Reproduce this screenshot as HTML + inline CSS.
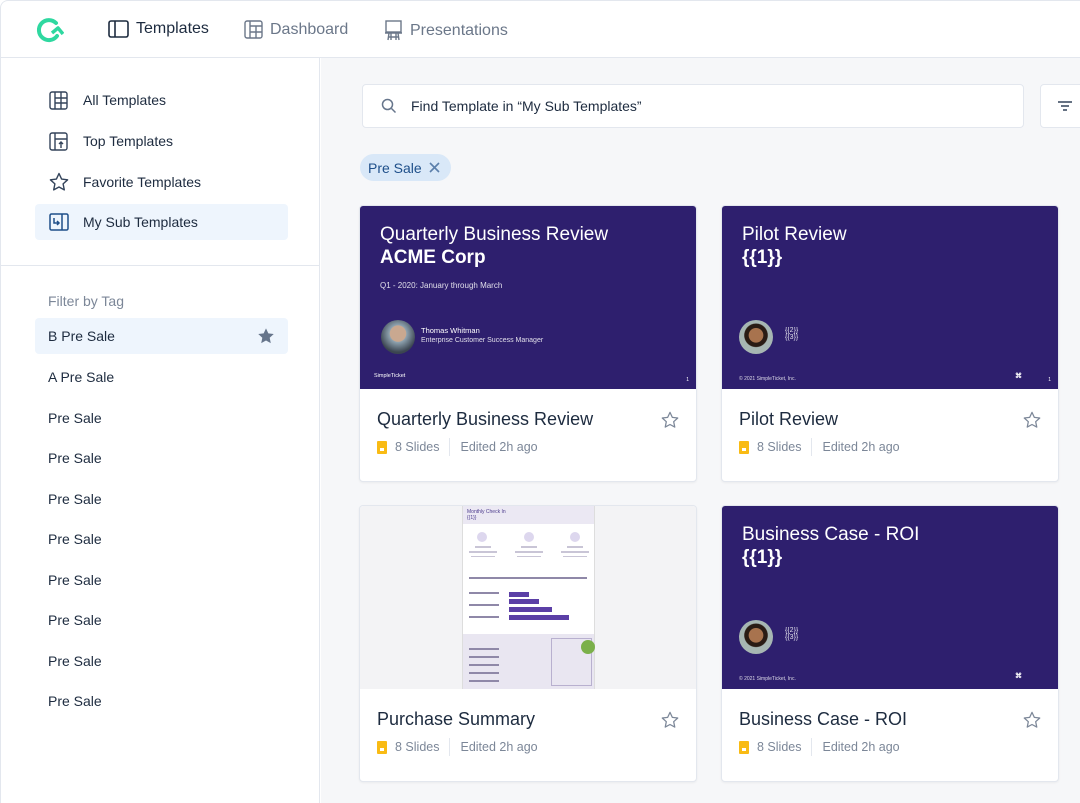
<!DOCTYPE html>
<html><head><meta charset="utf-8"><style>
*{box-sizing:border-box;margin:0;padding:0}
body{width:1080px;height:803px;overflow:hidden;font-family:"Liberation Sans",sans-serif;background:#fff;color:#1d2b3f;position:relative}
.hdr{position:absolute;left:0;top:0;width:1080px;height:58px;border-bottom:1px solid #e3e7ee;border-top:1px solid #e3e7ee;border-left:1px solid #e3e7ee;border-radius:8px 0 0 0;background:#fff}
.nav{position:absolute;top:19px;font-size:16px;display:flex;align-items:center;gap:7px}
.side{position:absolute;left:0;top:58px;width:320px;height:745px;border-right:1px solid #e3e7ee;border-left:1px solid #e3e7ee;background:#fff}
.si{position:absolute;left:34px;width:253px;height:36px;display:flex;align-items:center;font-size:14px;color:#1d2b3f;border-radius:4px}
.si svg{position:absolute;left:14px}
.si span{position:absolute;left:48px}
.tag{position:absolute;left:34px;width:253px;height:36px;font-size:14px;display:flex;align-items:center;padding-left:13px;border-radius:4px}
.main{position:absolute;left:321px;top:58px;width:759px;height:745px;background:#f6f7f9}
.card{position:absolute;width:338px;height:277px;background:#fff;border:1px solid #e3e7ee;border-radius:4px;overflow:hidden;box-shadow:0 1px 2px rgba(0,0,0,.05)}
.img{position:absolute;left:0;top:0;width:338px;height:183px;background:#2e1f6e;color:#fff}
.ttl{position:absolute;left:17px;top:203px;font-size:18px;color:#1d2b3f}
.meta{position:absolute;left:17px;top:232px;font-size:12.5px;color:#7c8798;display:flex;align-items:center}
.doc{width:10px;height:13px;background:#f9bb14;border-radius:1px;margin-right:8px;position:relative}
.doc:after{content:"";position:absolute;left:3px;top:7px;width:4px;height:3px;background:#fff}
.sep{width:1px;height:18px;background:#e3e7ee;margin:0 10px}
.star{position:absolute;right:17px;top:205px}
.ln{position:absolute;height:2px;background:#c9c5d6}
</style></head><body>
<div class="hdr">
<svg style="position:absolute;left:33px;top:15px" width="30" height="28" viewBox="0 0 30 28"><path d="M22 7A10 10 0 1 0 23 20" fill="none" stroke="#2fd8a0" stroke-width="4" stroke-linecap="round"/><path d="M18 17l6-5 5 6" fill="none" stroke="#2fd8a0" stroke-width="3.5" stroke-linejoin="round"/></svg>
<div class="nav" style="left:107px;color:#1d2b3f"><svg width="21" height="18" viewBox="0 0 21 18"><rect x="1" y="1" width="19" height="16" rx="2" fill="none" stroke="#1d2b3f" stroke-width="1.6"/><line x1="7" y1="1" x2="7" y2="17" stroke="#1d2b3f" stroke-width="1.6"/></svg>Templates</div>
<div class="nav" style="left:243px;color:#6b7789"><svg width="19" height="19" viewBox="0 0 19 19" fill="none" stroke="#6b7789" stroke-width="1.4"><rect x="1" y="1" width="17" height="17" rx="2"/><path d="M6 1v17M12 6v12M6 6h12M6 12h12"/></svg>Dashboard</div>
<div class="nav" style="left:383px;color:#6b7789"><svg width="19" height="21" viewBox="0 0 19 21" fill="none" stroke="#6b7789" stroke-width="1.4"><rect x="2" y="1" width="15" height="11"/><path d="M1 13h17M5 13l-1 7M14 13l1 7M7 13v7M12 13v7M4 17h11"/></svg>Presentations</div>
</div>
<div class="side">
<div class="si" style="top:24px"><svg width="19" height="19" viewBox="0 0 19 19" fill="none" stroke="#33435a" stroke-width="1.4"><rect x="1" y="1" width="17" height="17" rx="2"/><path d="M6 1v17M12 1v17M6 7h12M6 12h12"/></svg><span>All Templates</span></div>
<div class="si" style="top:65px"><svg width="19" height="19" viewBox="0 0 19 19" fill="none" stroke="#33435a" stroke-width="1.4"><rect x="1" y="1" width="17" height="17" rx="2"/><path d="M6 1v17M6 7h12M12 16v-6M10 12l2-2 2 2"/></svg><span>Top Templates</span></div>
<div class="si" style="top:106px"><svg width="20" height="20" viewBox="0 0 20 20" fill="none" stroke="#33435a" stroke-width="1.4"><path d="M10 1.5l2.6 5.6 6 .7-4.5 4.1 1.2 6L10 15l-5.3 2.9 1.2-6L1.4 7.8l6-.7z" stroke-linejoin="round"/></svg><span>Favorite Templates</span></div>
<div class="si" style="top:146px;background:#eef5fd"><svg width="20" height="18" viewBox="0 0 20 18" fill="none" stroke="#1e4f8a" stroke-width="1.5"><rect x="1" y="1" width="18" height="16" rx="1.5"/><path d="M13 1v16M5 5v5h5M8 8l2 2-2 2"/></svg><span>My Sub Templates</span></div>
<div style="position:absolute;left:0;top:207px;width:319px;height:1px;background:#e3e7ee"></div>
<div style="position:absolute;left:47px;top:235px;font-size:14px;color:#7c8798">Filter by Tag</div>
<div class="tag" style="top:260px;background:#eef5fd">B Pre Sale<svg style="position:absolute;right:13px" width="18" height="18" viewBox="0 0 20 20"><path d="M10 1.5l2.6 5.6 6 .7-4.5 4.1 1.2 6L10 15l-5.3 2.9 1.2-6L1.4 7.8l6-.7z" fill="#66758b"/></svg></div>
<div class="tag" style="top:301px">A Pre Sale</div>
<div class="tag" style="top:342px">Pre Sale</div>
<div class="tag" style="top:382px">Pre Sale</div>
<div class="tag" style="top:423px">Pre Sale</div>
<div class="tag" style="top:463px">Pre Sale</div>
<div class="tag" style="top:504px">Pre Sale</div>
<div class="tag" style="top:544px">Pre Sale</div>
<div class="tag" style="top:585px">Pre Sale</div>
<div class="tag" style="top:625px">Pre Sale</div>
</div>
<div class="main">
<div style="position:absolute;left:41px;top:26px;width:662px;height:44px;background:#fff;border:1px solid #e3e7ee;border-radius:4px;font-size:14px;color:#1d2b3f;padding:13px 0 0 48px">Find Template in “My Sub Templates”
<svg style="position:absolute;left:18px;top:13px" width="16" height="16" viewBox="0 0 16 16" fill="none" stroke="#66758b" stroke-width="1.5"><circle cx="6.5" cy="6.5" r="5"/><path d="M10.5 10.5l4 4"/></svg></div>
<div style="position:absolute;left:719px;top:26px;width:50px;height:44px;background:#fff;border:1px solid #e3e7ee;border-radius:4px"><svg style="position:absolute;left:17px;top:15px" width="14" height="12" viewBox="0 0 14 12" stroke="#33435a" stroke-width="1.5"><path d="M0 2h14M3 6h8M5 10h4"/></svg></div>
<div style="position:absolute;left:39px;top:96px;width:91px;height:27px;background:#d9e8f8;border-radius:14px;font-size:14px;color:#1e4f8a;padding:6px 0 0 8px">Pre Sale<svg style="position:absolute;left:69px;top:8px" width="11" height="11" viewBox="0 0 11 11" stroke="#5b7fab" stroke-width="1.6"><path d="M1 1l9 9M10 1l-9 9"/></svg></div>

<div class="card" style="left:38px;top:147px">
<div class="img">
<div style="position:absolute;left:20px;top:18px;font-size:19px">Quarterly Business Review</div>
<div style="position:absolute;left:20px;top:41px;font-size:19px;font-weight:bold">ACME Corp</div>
<div style="position:absolute;left:20px;top:75px;font-size:8px;opacity:.85">Q1 - 2020: January through March</div>
<div style="position:absolute;left:21px;top:114px;width:34px;height:34px;border-radius:50%;background:radial-gradient(circle at 50% 40%,#c9a890 0 30%,#8fa3b0 32%,#3b4550 70%)"></div>
<div style="position:absolute;left:61px;top:120px;font-size:7.5px">Thomas Whitman</div>
<div style="position:absolute;left:61px;top:131px;font-size:7px;opacity:.85">Enterprise Customer Success Manager</div>
<div style="position:absolute;left:14px;top:167px;font-size:5.5px">SimpleTicket</div>
<div style="position:absolute;right:9px;top:171px;font-size:5px">1</div>
</div>
<div class="ttl">Quarterly Business Review</div>
<div class="meta"><div class="doc"></div>8 Slides<div class="sep"></div>Edited 2h ago</div>
<svg class="star" width="18" height="18" viewBox="0 0 20 20" fill="none" stroke="#7c8798" stroke-width="1.4"><path d="M10 1.5l2.6 5.6 6 .7-4.5 4.1 1.2 6L10 15l-5.3 2.9 1.2-6L1.4 7.8l6-.7z" stroke-linejoin="round"/></svg>
</div>

<div class="card" style="left:400px;top:147px">
<div class="img">
<div style="position:absolute;left:20px;top:18px;font-size:19px">Pilot Review</div>
<div style="position:absolute;left:20px;top:41px;font-size:19px;font-weight:bold">{{1}}</div>
<div style="position:absolute;left:17px;top:114px;width:34px;height:34px;border-radius:50%;background:radial-gradient(circle at 50% 45%,#a8734e 0 28%,#2a1c15 30% 45%,#a7b6b3 48%)"></div>
<div style="position:absolute;left:63px;top:121px;font-size:7px;opacity:.85">{{2}}<br>{{3}}</div>
<div style="position:absolute;left:17px;top:170px;font-size:5px;opacity:.8">© 2021 SimpleTicket, Inc.</div>
<div style="position:absolute;left:293px;top:166px;font-size:7px;font-weight:bold">⌘</div>
<div style="position:absolute;right:9px;top:171px;font-size:5px">1</div>
</div>
<div class="ttl">Pilot Review</div>
<div class="meta"><div class="doc"></div>8 Slides<div class="sep"></div>Edited 2h ago</div>
<svg class="star" width="18" height="18" viewBox="0 0 20 20" fill="none" stroke="#7c8798" stroke-width="1.4"><path d="M10 1.5l2.6 5.6 6 .7-4.5 4.1 1.2 6L10 15l-5.3 2.9 1.2-6L1.4 7.8l6-.7z" stroke-linejoin="round"/></svg>
</div>

<div class="card" style="left:38px;top:447px">
<div class="img" style="background:#f3f3f5">
<div style="position:absolute;left:102px;top:0;width:133px;height:183px;background:#fff;border-left:1px solid #ddd;border-right:1px solid #ddd">
<div style="height:18px;background:#ebe8f3;font-size:5px;color:#4b3a8c;padding:3px 4px">Monthly Check In<br>{{1}}</div>
<div style="position:absolute;left:14px;top:26px;width:10px;height:10px;border-radius:50%;background:#ddd7ee"></div>
<div style="position:absolute;left:61px;top:26px;width:10px;height:10px;border-radius:50%;background:#ddd7ee"></div>
<div style="position:absolute;left:107px;top:26px;width:10px;height:10px;border-radius:50%;background:#ddd7ee"></div>
<div class="ln" style="left:12px;top:40px;width:16px"></div><div class="ln" style="left:58px;top:40px;width:16px"></div><div class="ln" style="left:104px;top:40px;width:16px"></div>
<div class="ln" style="left:6px;top:45px;width:28px"></div><div class="ln" style="left:52px;top:45px;width:28px"></div><div class="ln" style="left:98px;top:45px;width:28px"></div>
<div class="ln" style="left:8px;top:50px;width:24px;height:1px"></div><div class="ln" style="left:54px;top:50px;width:24px;height:1px"></div><div class="ln" style="left:100px;top:50px;width:24px;height:1px"></div>
<div class="ln" style="left:6px;top:71px;width:118px;background:#8f88a8"></div>
<div class="ln" style="left:6px;top:86px;width:30px;background:#8f88a8"></div>
<div class="ln" style="left:6px;top:98px;width:30px;background:#8f88a8"></div>
<div class="ln" style="left:6px;top:110px;width:30px;background:#8f88a8"></div>
<div style="position:absolute;left:46px;top:86px;width:20px;height:5px;background:#5b3fa6"></div>
<div style="position:absolute;left:46px;top:93px;width:30px;height:5px;background:#5b3fa6"></div>
<div style="position:absolute;left:46px;top:101px;width:43px;height:5px;background:#5b3fa6"></div>
<div style="position:absolute;left:46px;top:109px;width:60px;height:5px;background:#5b3fa6"></div>
<div style="position:absolute;left:0;top:128px;width:131px;height:55px;background:#e9e6f1"></div>
<div class="ln" style="left:6px;top:142px;width:30px;background:#8f88a8"></div>
<div class="ln" style="left:6px;top:150px;width:30px;background:#8f88a8"></div>
<div class="ln" style="left:6px;top:158px;width:30px;background:#8f88a8"></div>
<div class="ln" style="left:6px;top:166px;width:30px;background:#8f88a8"></div>
<div class="ln" style="left:6px;top:174px;width:30px;background:#8f88a8"></div>
<div style="position:absolute;left:88px;top:132px;width:41px;height:48px;border:1px solid #b8b0cf"></div>
<div style="position:absolute;left:118px;top:134px;width:14px;height:14px;border-radius:50%;background:#7bb04a"></div>
</div>
</div>
<div class="ttl">Purchase Summary</div>
<div class="meta"><div class="doc"></div>8 Slides<div class="sep"></div>Edited 2h ago</div>
<svg class="star" width="18" height="18" viewBox="0 0 20 20" fill="none" stroke="#7c8798" stroke-width="1.4"><path d="M10 1.5l2.6 5.6 6 .7-4.5 4.1 1.2 6L10 15l-5.3 2.9 1.2-6L1.4 7.8l6-.7z" stroke-linejoin="round"/></svg>
</div>

<div class="card" style="left:400px;top:447px">
<div class="img">
<div style="position:absolute;left:20px;top:18px;font-size:19px">Business Case - ROI</div>
<div style="position:absolute;left:20px;top:41px;font-size:19px;font-weight:bold">{{1}}</div>
<div style="position:absolute;left:17px;top:114px;width:34px;height:34px;border-radius:50%;background:radial-gradient(circle at 50% 45%,#a8734e 0 28%,#2a1c15 30% 45%,#a7b6b3 48%)"></div>
<div style="position:absolute;left:63px;top:121px;font-size:7px;opacity:.85">{{2}}<br>{{3}}</div>
<div style="position:absolute;left:17px;top:170px;font-size:5px;opacity:.8">© 2021 SimpleTicket, Inc.</div>
<div style="position:absolute;left:293px;top:166px;font-size:7px;font-weight:bold">⌘</div>
</div>
<div class="ttl">Business Case - ROI</div>
<div class="meta"><div class="doc"></div>8 Slides<div class="sep"></div>Edited 2h ago</div>
<svg class="star" width="18" height="18" viewBox="0 0 20 20" fill="none" stroke="#7c8798" stroke-width="1.4"><path d="M10 1.5l2.6 5.6 6 .7-4.5 4.1 1.2 6L10 15l-5.3 2.9 1.2-6L1.4 7.8l6-.7z" stroke-linejoin="round"/></svg>
</div>
</div>
</body></html>
